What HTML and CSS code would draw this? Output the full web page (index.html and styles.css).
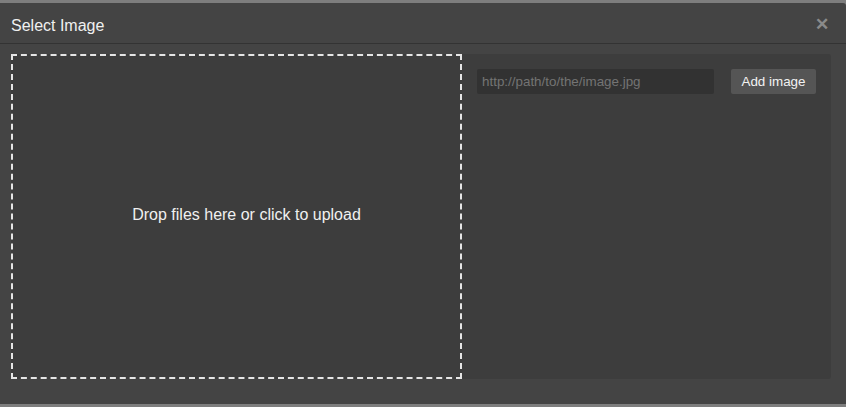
FILE: index.html
```html
<!DOCTYPE html>
<html>
<head>
<meta charset="utf-8">
<link rel="stylesheet" href="styles.css">
</head>
<body>
<div class="dialog">
  <div class="dialog-header">
    <span class="dialog-title">Select Image</span>
    <span class="dialog-close">&#x2715;</span>
  </div>
  <div class="dialog-body">
    <div class="panel">
      <div class="dropzone">Drop files here or click to upload</div>
      <div class="url-form">
        <input class="url-input" type="text" placeholder="http://path/to/the/image.jpg">
        <button class="add-btn">Add image</button>
      </div>
    </div>
  </div>
</div>
</body>
</html>
```
FILE: styles.css
```css
html, body {
  margin: 0;
  padding: 0;
}
body {
  background: #7e7e7e;
  font-family: "Liberation Sans", Arial, sans-serif;
  padding-top: 3px;
  height: 407px;
  box-sizing: border-box;
  overflow: hidden;
}
.dialog {
  background: #444444;
  height: 401px;
  border-radius: 0 3px 0 0;
  display: flex;
  flex-direction: column;
}
.dialog-header {
  height: 40px;
  border-bottom: 1px solid #333333;
  display: flex;
  align-items: center;
  justify-content: space-between;
  padding: 0 17px 0 11px;
}
.dialog-title {
  color: #f0f0f0;
  font-size: 16px;
  padding-top: 5px;
}
.dialog-close {
  color: #8a8a8a;
  font-size: 17px;
  font-weight: bold;
  padding-top: 2px;
}
.dialog-body {
  padding: 10px 15px 0 11px;
}
.panel {
  background: #3d3d3d;
  height: 325px;
  display: flex;
  border-radius: 0 3px 3px 0;
}
.dropzone {
  width: 451px;
  height: 325px;
  box-sizing: border-box;
  border: 2px dashed #e6e6e6;
  display: flex;
  align-items: center;
  justify-content: center;
  color: #f0f0f0;
  font-size: 16px;
  padding: 0 0 3px 20px;
}
.url-form {
  display: flex;
  align-items: flex-start;
  padding: 15px 15px 0 15px;
  gap: 17px;
}
.url-input {
  width: 237px;
  height: 25px;
  box-sizing: border-box;
  background: #323232;
  border: none;
  border-radius: 2px;
  color: #ccc;
  font-family: "Liberation Sans", Arial, sans-serif;
  font-size: 13.4px;
  padding: 0 5px;
  outline: none;
}
.url-input::placeholder {
  color: #747474;
}
.add-btn {
  width: 85px;
  height: 25px;
  background: #555555;
  border: none;
  border-radius: 2px;
  color: #f2f2f2;
  font-family: "Liberation Sans", Arial, sans-serif;
  font-size: 13.4px;
  padding: 0;
}
```
